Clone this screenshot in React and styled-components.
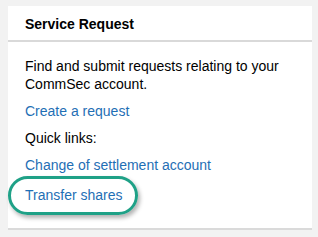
import styled, { createGlobalStyle } from 'styled-components';

const GlobalStyle = createGlobalStyle`
  html, body {
    margin: 0;
    padding: 0;
    background: #f2f2f2;
  }
  body {
    font-family: 'Liberation Sans', Arial, sans-serif;
  }
`;

const Page = styled.div`
  padding: 6px 6px 0 8px;
  width: 318px;
  height: 237px;
  box-sizing: border-box;
  background: #f2f2f2;
`;

const Card = styled.section`
  background: #ffffff;
  border-bottom: 2px solid #dadada;
  display: flex;
  flex-direction: column;
`;

const CardHeader = styled.h2`
  margin: 0;
  height: 36px;
  box-sizing: border-box;
  padding: 9px 17px 0;
  font-size: 14px;
  line-height: 18px;
  font-weight: 700;
  color: #000;
  border-bottom: 2px solid #d9d9d9;
`;

const CardBody = styled.div`
  display: flex;
  flex-direction: column;
  padding: 15px 17px 24px;
  font-size: 14px;
  line-height: 18px;
  color: #000;
`;

const Text = styled.p`
  margin: 0 0 ${(p) => p.$gap || 9}px;
`;

const Link = styled.a`
  display: inline-block;
  align-self: flex-start;
  color: #1f6fb5;
  text-decoration: none;
  margin-bottom: ${(p) => p.$gap ?? 9}px;
  position: relative;
`;

const Highlight = styled.span`
  position: absolute;
  top: -10px;
  bottom: -11px;
  left: -17px;
  right: -15px;
  border: 3px solid #1fa187;
  border-radius: 20px;
  box-shadow: 2px 3px 4px rgba(0, 0, 0, 0.3);
  pointer-events: none;
`;

export default function App() {
  return (
    <>
      <GlobalStyle />
      <Page>
        <Card>
          <CardHeader>Service Request</CardHeader>
          <CardBody>
            <Text>
              Find and submit requests relating to your
              <br />
              CommSec account.
            </Text>
            <Link href="#">Create a request</Link>
            <Text>Quick links:</Text>
            <Link href="#" $gap={12}>Change of settlement account</Link>
            <Link href="#" $gap={0}>
              Transfer shares
              <Highlight />
            </Link>
          </CardBody>
        </Card>
      </Page>
    </>
  );
}
